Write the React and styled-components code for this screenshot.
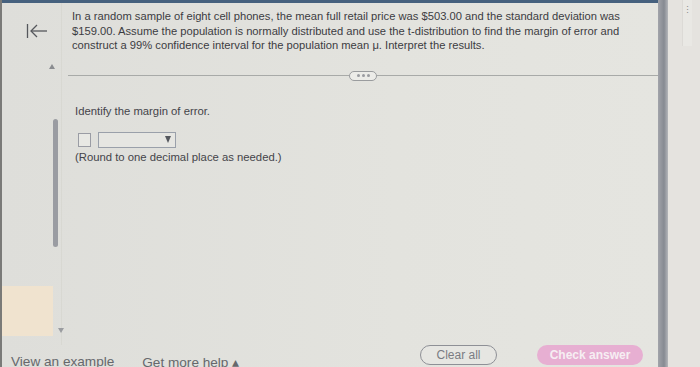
import styled, { createGlobalStyle } from "styled-components";

const GlobalStyle = createGlobalStyle`
    html, body { margin: 0; padding: 0; }
    body {
        width: 700px;
        height: 367px;
        overflow: hidden;
        background: #e2e2dc;
        font-family: "Liberation Sans", Arial, sans-serif;
    }
`

const Screen = styled.div`
    display: flex;
    width: 700px;
    height: 367px;
    overflow: hidden;
    border-left: 2px solid #7a7a78;
    box-sizing: border-box;
`

const Main = styled.div`
    display: flex;
    flex-direction: column;
    width: 656px;
    background: linear-gradient(90deg, #dededa 0%, #e3e3de 60%, #e5e5e0 100%);
`

const TopStrip = styled.div`
    height: 3px;
    background: #46617e;
    flex-shrink: 0;
`

const Body = styled.div`
    display: flex;
    height: 342px;
`

const Rail = styled.div`
    display: flex;
    flex-direction: column;
    align-items: flex-start;
    width: 60px;
    flex-shrink: 0;
    border-right: 1px solid #d8d8d2;
    box-sizing: border-box;
`

const BackArrow = styled.div`
    margin: 20px 0 0 24px;
    height: 22px;
`

const Triangle = styled.div`
    width: 0;
    height: 0;
    border-left: 3px solid transparent;
    border-right: 3px solid transparent;
    ${p => p.$up
        ? `border-bottom: 5px solid #8a8c90; margin: 19px 0 0 47px;`
        : `border-top: 5px solid #9a9ca0; margin: -8px 0 0 56px;`}
`

const Track = styled.div`
    display: flex;
    flex-direction: column;
    width: 100%;
    flex: 1;
`

const Thumb = styled.div`
    width: 5px;
    height: 128px;
    margin: 50px 0 0 51px;
    border-radius: 3px;
    background: #9a9ca2;
`

const Peach = styled.div`
    width: 53px;
    height: 50px;
    margin-top: 39px;
    margin-left: -2px;
    background: #f0e3cf;
`

const Content = styled.div`
    display: flex;
    flex-direction: column;
    flex: 1;
    min-width: 0;
`

const Question = styled.p`
    margin: 6px 0 0 10px;
    width: 580px;
    font-size: 11.2px;
    line-height: 14.5px;
    color: #3c3c42;
`

const DividerRow = styled.div`
    display: flex;
    align-items: center;
    margin: 17px 0 0 6px;
    height: 12px;
`

const Line = styled.div`
    flex: 1;
    height: 1px;
    background: #a8aaa8;
`

const Pill = styled.div`
    display: flex;
    align-items: center;
    justify-content: center;
    gap: 2px;
    width: 26px;
    height: 8px;
    border: 1px solid #9a9c9e;
    border-radius: 5px;
    background: #ecece8;
`

const Dot = styled.span`
    width: 3px;
    height: 3px;
    border-radius: 50%;
    background: #9a9ca0;
`

const Part = styled.div`
    display: flex;
    flex-direction: column;
    margin: 22px 0 0 13px;
    font-size: 11.3px;
    color: #44444a;
`

const Label = styled.div`
    line-height: 14px;
`

const AnswerRow = styled.div`
    display: flex;
    align-items: center;
    gap: 7px;
    margin: 14px 0 0 3px;
`

const Box = styled.div`
    width: 11px;
    height: 12px;
    border: 1px solid #9a9ca4;
    background: #e8e8e4;
`

const Select = styled.div`
    display: flex;
    align-items: center;
    justify-content: flex-end;
    width: 78px;
    height: 16px;
    padding-right: 4px;
    box-sizing: border-box;
    border: 1px solid #9aa0aa;
    background: #e6e6e2;
`

const Caret = styled.div`
    width: 0;
    height: 0;
    border-left: 3.5px solid transparent;
    border-right: 3.5px solid transparent;
    border-top: 7px solid #55585e;
`

const Hint = styled.div`
    margin-top: 2px;
    line-height: 14px;
`

const Footer = styled.div`
    display: flex;
    align-items: flex-start;
    height: 22px;
    padding-left: 9px;
    font-size: 13.6px;
    color: #66686c;
`

const FooterLink = styled.span`
    margin-top: 9px;
    margin-right: ${p => p.$gap || 0}px;
    white-space: nowrap;
`

const Spacer = styled.div`
    flex: 1;
`

const PillButton = styled.div`
    display: flex;
    align-items: center;
    justify-content: center;
    height: 20px;
    width: ${p => p.$w}px;
    margin-right: ${p => p.$mr}px;
    border-radius: 11px;
    font-size: 12px;
    box-sizing: border-box;
    ${p => p.$primary
        ? `background: #e7afd2; color: #f6eef2; font-weight: bold;`
        : `border: 1.5px solid #8e9096; color: #7a7c82; background: #e6e6e2;`}
`

const SideBar = styled.div`
    width: 10px;
    background: linear-gradient(90deg, #a2a4aa, #868a92 60%, #b4b6ba);
`

const RightPanel = styled.div`
    flex: 1;
    display: flex;
    justify-content: center;
    background: #e5e3df;
`

const Handle = styled.div`
    width: 10px;
    height: 46px;
    margin-left: 6px;
    background: #e9e8e4;
    border-left: 1px solid #dcdad6;
    display: flex;
    justify-content: center;
    padding-top: 8px;
    box-sizing: border-box;
    color: #8a8a8a;
    font-size: 9px;
    line-height: 4px;
`

export default function App() {
    return (
        <>
            <GlobalStyle />
            <Screen>
                <Main>
                    <TopStrip />
                    <Body>
                        <Rail>
                            <BackArrow>
                                <svg width="22" height="16" viewBox="0 0 22 16" fill="none" stroke="#55575c" strokeWidth="1.3">
                                    <path d="M1.5 1v14" />
                                    <path d="M5 8h16" />
                                    <path d="M11 2L5 8l6 6" />
                                </svg>
                            </BackArrow>
                            <Triangle $up />
                            <Track>
                                <Thumb />
                                <Peach />
                                <Triangle />
                            </Track>
                        </Rail>
                        <Content>
                            <Question>
                                In a random sample of eight cell phones, the mean full retail price was $503.00 and the standard deviation was
                                $159.00. Assume the population is normally distributed and use the t-distribution to find the margin of error and
                                construct a 99% confidence interval for the population mean μ. Interpret the results.
                            </Question>
                            <DividerRow>
                                <Line />
                                <Pill><Dot /><Dot /><Dot /></Pill>
                                <Line />
                            </DividerRow>
                            <Part>
                                <Label>Identify the margin of error.</Label>
                                <AnswerRow>
                                    <Box />
                                    <Select><Caret /></Select>
                                </AnswerRow>
                                <Hint>(Round to one decimal place as needed.)</Hint>
                            </Part>
                        </Content>
                    </Body>
                    <Footer>
                        <FooterLink $gap={28}>View an example</FooterLink>
                        <FooterLink>Get more help ▴</FooterLink>
                        <Spacer />
                        <PillButton $w={77} $mr={40}>Clear all</PillButton>
                        <PillButton $primary $w={106} $mr={15}>Check answer</PillButton>
                    </Footer>
                </Main>
                <SideBar />
                <RightPanel>
                    <Handle>⋮</Handle>
                </RightPanel>
            </Screen>
        </>
    );
}
